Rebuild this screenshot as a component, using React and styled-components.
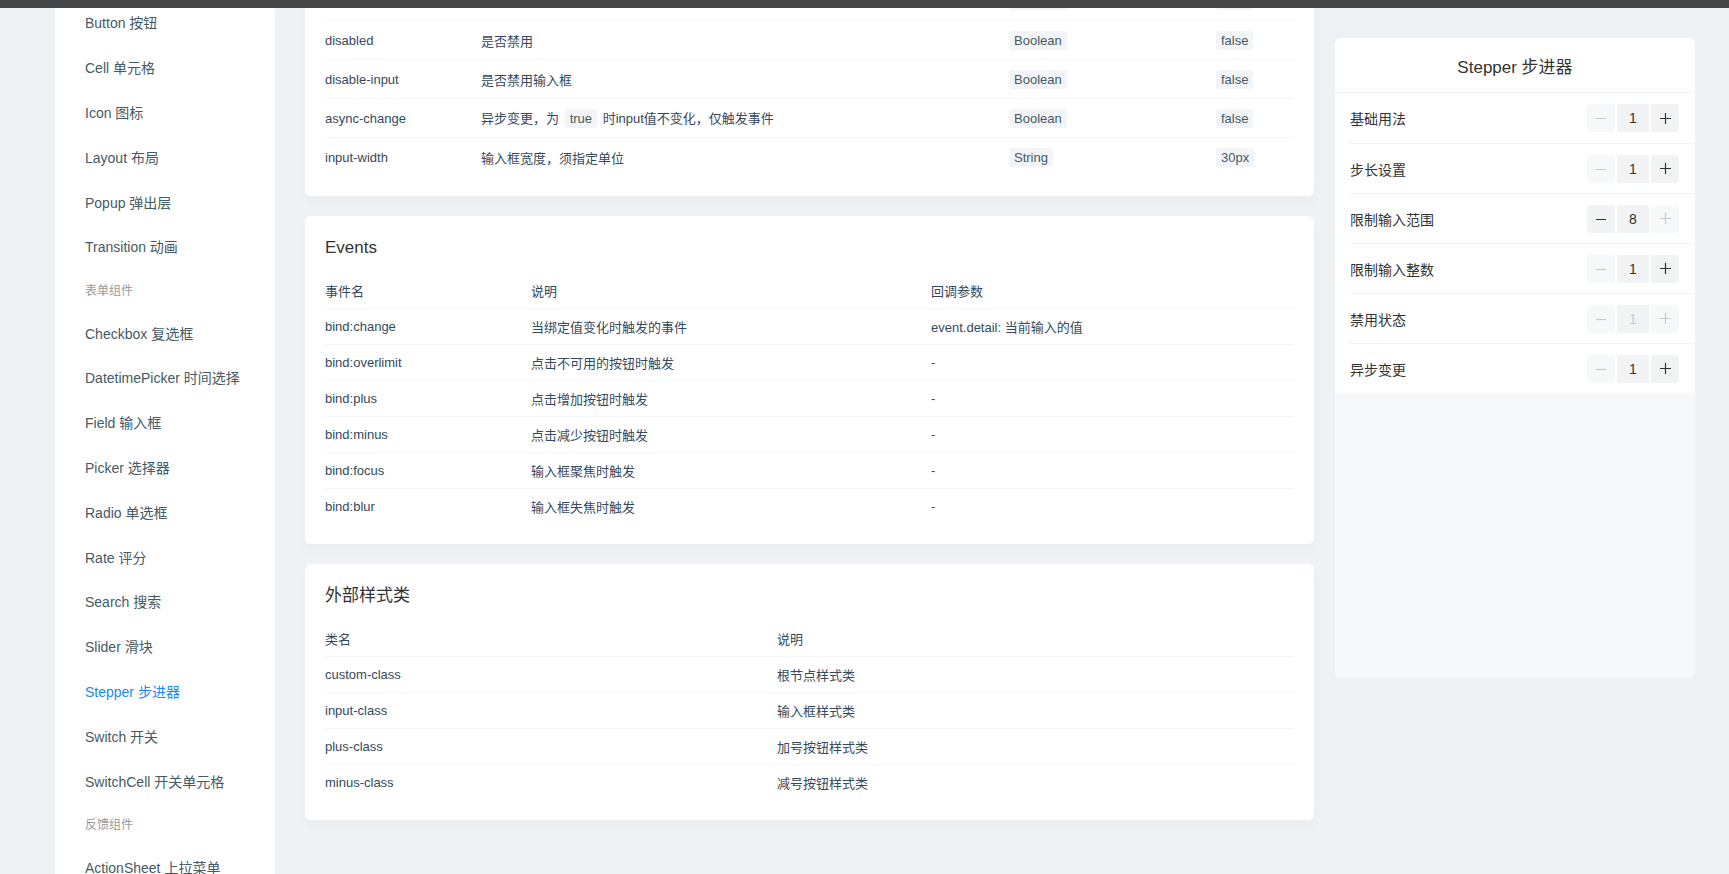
import React from "react";
import styled, { createGlobalStyle, css } from "styled-components";

const GlobalStyle = createGlobalStyle`
  html, body {
    margin: 0;
    padding: 0;
    height: 100%;
    overflow: hidden;
    background: #eff2f5;
    font-family: "Liberation Sans", "Noto Sans CJK SC", sans-serif;
    -webkit-font-smoothing: antialiased;
  }
  * { box-sizing: border-box; }
`;

const nav = [
  { title: "Button 按钮" },
  { title: "Cell 单元格" },
  { title: "Icon 图标" },
  { title: "Layout 布局" },
  { title: "Popup 弹出层" },
  { title: "Transition 动画" },
  { group: "表单组件" },
  { title: "Checkbox 复选框" },
  { title: "DatetimePicker 时间选择" },
  { title: "Field 输入框" },
  { title: "Picker 选择器" },
  { title: "Radio 单选框" },
  { title: "Rate 评分" },
  { title: "Search 搜索" },
  { title: "Slider 滑块" },
  { title: "Stepper 步进器", active: true },
  { title: "Switch 开关" },
  { title: "SwitchCell 开关单元格" },
  { group: "反馈组件" },
  { title: "ActionSheet 上拉菜单" },
];

const props = [
  ["integer", "是否只允许输入整数", "Boolean", "false"],
  ["disabled", "是否禁用", "Boolean", "false"],
  ["disable-input", "是否禁用输入框", "Boolean", "false"],
  ["async-change", null, "Boolean", "false"],
  ["input-width", "输入框宽度，须指定单位", "String", "30px"],
];

const events = [
  ["bind:change", "当绑定值变化时触发的事件", "event.detail: 当前输入的值"],
  ["bind:overlimit", "点击不可用的按钮时触发", "-"],
  ["bind:plus", "点击增加按钮时触发", "-"],
  ["bind:minus", "点击减少按钮时触发", "-"],
  ["bind:focus", "输入框聚焦时触发", "-"],
  ["bind:blur", "输入框失焦时触发", "-"],
];

const classes = [
  ["custom-class", "根节点样式类"],
  ["input-class", "输入框样式类"],
  ["plus-class", "加号按钮样式类"],
  ["minus-class", "减号按钮样式类"],
];

const demos = [
  { label: "基础用法", value: 1, minus: false, plus: true },
  { label: "步长设置", value: 1, minus: false, plus: true },
  { label: "限制输入范围", value: 8, minus: true, plus: false },
  { label: "限制输入整数", value: 1, minus: false, plus: true },
  { label: "禁用状态", value: 1, minus: false, plus: false, disabled: true },
  { label: "异步变更", value: 1, minus: false, plus: true },
];

// dark strip of the browser window lying over the scrolled page
const TopBar = styled.div`
  position: fixed;
  top: 0;
  left: 0;
  right: 0;
  height: 8px;
  background: #464646;
  z-index: 10;
`;

const Page = styled.div`
  display: flex;
  align-items: flex-start;
  height: 100vh;
  overflow: hidden;
`;

const Sidebar = styled.nav`
  flex: 0 0 220px;
  margin-left: 55px;
  height: 100%;
  background: #fff;
  padding-left: 30px;
`;

const NavItem = styled.div`
  height: 44.8px;
  display: flex;
  align-items: center;
  font-size: 14px;
  color: ${(p) => (p.$active ? "#1989fa" : "#455a64")};
  white-space: nowrap;
`;

const NavGroup = styled.div`
  height: 41.4px;
  display: flex;
  align-items: center;
  font-size: 12px;
  color: #999;
`;

const Main = styled.main`
  flex: 0 0 1009px;
  margin-left: 30px;
  display: flex;
  flex-direction: column;
  gap: 20px;
`;

const Card = styled.section`
  background: #fff;
  border-radius: 6px;
  padding: 20px;
  box-shadow: 0 8px 12px #ebedf0;
  ${(p) =>
    p.$scrolled &&
    css`
      margin-top: -20px;
      padding-top: 0;
      border-radius: 0 0 6px 6px;
    `}
`;

const CardTitle = styled.h3`
  margin: 0 0 12px;
  font-size: 17px;
  line-height: 24px;
  font-weight: 400;
  color: #333;
`;

const Row = styled.div`
  display: grid;
  grid-template-columns: ${(p) => p.$cols};
  align-items: center;
  height: ${(p) => p.$h || 36}px;
  font-size: 13px;
  color: #34495e;
  border-top: ${(p) => (p.$head ? "none" : "1px solid #f1f4f8")};
  white-space: nowrap;
`;

const Code = styled.code`
  display: inline-block;
  font-family: "Liberation Sans", "Noto Sans CJK SC", sans-serif;
  font-size: 13px;
  line-height: 15px;
  padding: 2px 5px;
  margin: 0 2px;
  border-radius: 3px;
  background: #f2f4f7;
  color: #455a64;
  ${(p) => p.$first && "margin-left: 0;"}
`;

const Phone = styled.aside`
  flex: 0 0 360px;
  margin: 38px 0 0 21px;
  height: 640px;
  border-radius: 6px;
  background: #f7f8fa;
  overflow: hidden;
`;

const PhoneTitle = styled.div`
  height: 55px;
  display: flex;
  align-items: center;
  justify-content: center;
  background: #fff;
  border-bottom: 1px solid #f2f3f5;
  font-size: 17px;
  color: #333;
`;

const DemoRow = styled.div`
  background: #fff;
  padding-left: 15px;
`;

const DemoInner = styled.div`
  height: 50px;
  display: flex;
  align-items: center;
  justify-content: space-between;
  padding-right: 16px;
  border-top: ${(p) => (p.$first ? "none" : "1px solid #f2f3f5")};
  font-size: 14px;
  color: #333;
`;

const StepperBox = styled.div`
  display: flex;
  gap: 2px;
`;

const StepBtn = styled.div`
  width: 28px;
  height: 28px;
  display: flex;
  align-items: center;
  justify-content: center;
  background: ${(p) => (p.$enabled ? "#f2f3f5" : "#f7f8fa")};
  color: ${(p) => (p.$enabled ? "#323233" : "#c8c9cc")};
  border-radius: ${(p) => (p.$side === "left" ? "4px 0 0 4px" : "0 4px 4px 0")};
`;

const StepInput = styled.div`
  width: 32px;
  height: 28px;
  display: flex;
  align-items: center;
  justify-content: center;
  background: #f2f3f5;
  font-size: 14px;
  color: ${(p) => (p.$disabled ? "#c8c9cc" : "#323233")};
`;

const MinusIcon = () => (
  <svg width="10" height="10" viewBox="0 0 10 10">
    <path d="M0 5.5h10" stroke="currentColor" strokeWidth="1.2" />
  </svg>
);

const PlusIcon = () => (
  <svg width="11" height="11" viewBox="0 0 11 11">
    <path d="M0 5.5h11M5.5 0v11" stroke="currentColor" strokeWidth="1.2" />
  </svg>
);

const Stepper = ({ value, minus, plus, disabled }) => (
  <StepperBox>
    <StepBtn $side="left" $enabled={minus}>
      <MinusIcon />
    </StepBtn>
    <StepInput $disabled={disabled}>{value}</StepInput>
    <StepBtn $side="right" $enabled={plus}>
      <PlusIcon />
    </StepBtn>
  </StepperBox>
);

const propCols = "156px 528px 207px 1fr";
const eventCols = "206px 400px 1fr";
const classCols = "452px 1fr";

export default function App() {
  return (
    <>
      <GlobalStyle />
      <TopBar />
      <Page>
        <Sidebar>
          {nav.map((n, i) =>
            n.group ? (
              <NavGroup key={i}>{n.group}</NavGroup>
            ) : (
              <NavItem key={i} $active={n.active}>
                {n.title}
              </NavItem>
            )
          )}
        </Sidebar>

        <Main>
          <Card $scrolled>
            {props.map(([name, desc, type, def], i) => (
              <Row key={name} $cols={propCols} $h={i === 0 ? 40 : 39}>
                <span>{name}</span>
                <span>
                  {desc || (
                    <>
                      异步变更，为 <Code>true</Code> 时input值不变化，仅触发事件
                    </>
                  )}
                </span>
                <span>
                  <Code $first>{type}</Code>
                </span>
                <span>
                  <Code $first>{def}</Code>
                </span>
              </Row>
            ))}
          </Card>

          <Card>
            <CardTitle>Events</CardTitle>
            <Row $cols={eventCols} $head>
              <span>事件名</span>
              <span>说明</span>
              <span>回调参数</span>
            </Row>
            {events.map(([name, desc, arg]) => (
              <Row key={name} $cols={eventCols}>
                <span>{name}</span>
                <span>{desc}</span>
                <span>{arg}</span>
              </Row>
            ))}
          </Card>

          <Card>
            <CardTitle>外部样式类</CardTitle>
            <Row $cols={classCols} $head>
              <span>类名</span>
              <span>说明</span>
            </Row>
            {classes.map(([name, desc]) => (
              <Row key={name} $cols={classCols}>
                <span>{name}</span>
                <span>{desc}</span>
              </Row>
            ))}
          </Card>
        </Main>

        <Phone>
          <PhoneTitle>Stepper 步进器</PhoneTitle>
          {demos.map((d, i) => (
            <DemoRow key={d.label}>
              <DemoInner $first={i === 0}>
                <span>{d.label}</span>
                <Stepper {...d} />
              </DemoInner>
            </DemoRow>
          ))}
        </Phone>
      </Page>
    </>
  );
}
